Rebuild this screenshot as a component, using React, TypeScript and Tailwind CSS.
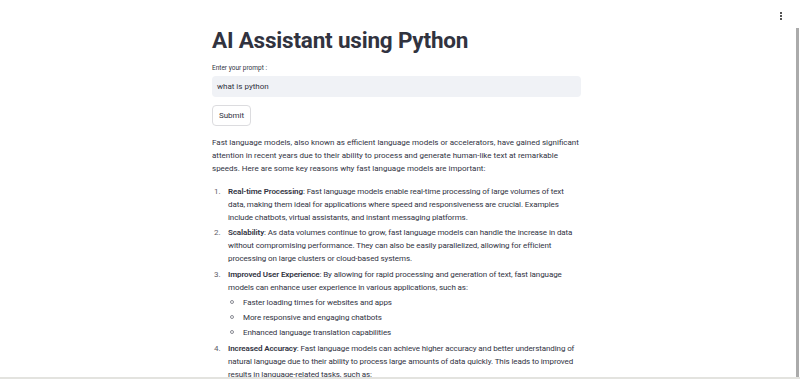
function Item({ n, children, className = "" }: { n: number; children: React.ReactNode; className?: string }) {
  return (
    <li className={"flex " + className}>
      <span className="w-[16px] shrink-0 pl-[2px] text-[#5f616a]">{n}.</span>
      <div className="min-w-0 flex-1">{children}</div>
    </li>
  );
}

function Bullet({ children }: { children: React.ReactNode }) {
  return (
    <li className="mt-[2px] flex items-center">
      <span className="ml-[2px] mr-[9px] block h-[4px] w-[4px] shrink-0 rounded-full border border-[#8a8c94]" />
      <span>{children}</span>
    </li>
  );
}

export default function App() {
  return (
    <div className="relative h-[379px] w-[800px] overflow-hidden bg-white text-[#31333F] font-[family-name:Roboto,sans-serif]">
      <div className="absolute right-[18px] top-[12px] flex flex-col gap-[1px]">
        <span className="block h-[2px] w-[2px] bg-[#555]" />
        <span className="block h-[2px] w-[2px] bg-[#555]" />
        <span className="block h-[2px] w-[2px] bg-[#555]" />
      </div>
      <div className="absolute right-[1px] top-[28px] bottom-0 w-[3px] bg-[#ababab]" />
      <div className="absolute bottom-0 left-0 right-0 h-[2px] bg-[#e3e3df]" />

      <div className="flex justify-center pr-[7px]">
        <div className="w-[369px] pt-[26px]">
          <h1 className="text-[22.5px] font-bold leading-[28px] tracking-[-0.2px]">AI Assistant using Python</h1>
          <div className="mt-[9px] text-[6.5px] leading-[10px]">Enter your prompt :</div>
          <div className="mt-[3px] flex h-[21px] items-center rounded-[4px] bg-[#F0F2F6] px-[5px] text-[8px]">what is python</div>
          <button className="mt-[8px] flex h-[21px] w-[39px] items-center justify-center rounded-[4px] border border-[#dcdcdf] bg-white text-[8px]">Submit</button>
          <p className="mt-[9.5px] text-[8px] leading-[13px]">
            Fast language models, also known as efficient language models or accelerators, have gained significant attention in recent years due to their ability to process and generate human-like text at remarkable speeds. Here are some key reasons why fast language models are important:
          </p>
          <ol className="mt-[10px] text-[8px] leading-[13px] tracking-[-0.1px]">
            <Item n={1}>
              <strong className="font-semibold">Real-time Processing</strong>: Fast language models enable real-time processing of large volumes of text data, making them ideal for applications where speed and responsiveness are crucial. Examples include chatbots, virtual assistants, and instant messaging platforms.
            </Item>
            <Item n={2} className="mt-[2.5px]">
              <strong className="font-semibold">Scalability</strong>: As data volumes continue to grow, fast language models can handle the increase in data without compromising performance. They can also be easily parallelized, allowing for efficient processing on large clusters or cloud-based systems.
            </Item>
            <Item n={3} className="mt-[2.5px]">
              <strong className="font-semibold">Improved User Experience</strong>: By allowing for rapid processing and generation of text, fast language models can enhance user experience in various applications, such as:
              <ul>
                <Bullet>Faster loading times for websites and apps</Bullet>
                <Bullet>More responsive and engaging chatbots</Bullet>
                <Bullet>Enhanced language translation capabilities</Bullet>
              </ul>
            </Item>
            <Item n={4} className="mt-[3px]">
              <strong className="font-semibold">Increased Accuracy</strong>: Fast language models can achieve higher accuracy and better understanding of natural language due to their ability to process large amounts of data quickly. This leads to improved results in language-related tasks, such as:
            </Item>
          </ol>
        </div>
      </div>
    </div>
  );
}
